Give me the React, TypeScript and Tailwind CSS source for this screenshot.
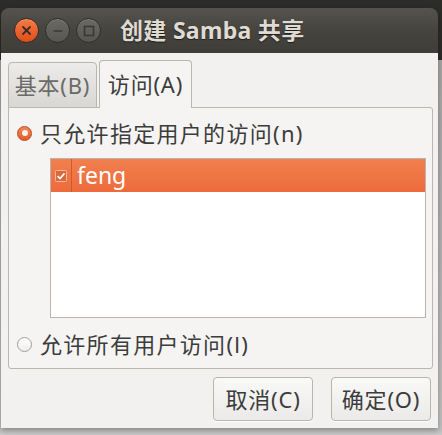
import React from "react";

const FONT = '"Noto Sans", "Noto Sans CJK SC", sans-serif';

function WinButton({ kind }: { kind: "close" | "min" | "max" }) {
  if (kind === "close") {
    return (
      <div className="w-[25px] h-[25px] rounded-full border border-[#3a2a22] bg-[linear-gradient(to_bottom,#f47a44,#df4e1a)] flex items-center justify-center shadow-[inset_0_1px_0_rgba(255,255,255,0.25)]">
        <svg width="11" height="11" viewBox="0 0 11 11">
          <path d="M2 2 L9 9 M9 2 L2 9" stroke="#3a2d28" strokeWidth="1.8" strokeLinecap="round" />
        </svg>
      </div>
    );
  }
  return (
    <div className="w-[25px] h-[25px] rounded-full border border-[#2f2e2b] bg-[linear-gradient(to_bottom,#6a6964,#57564f)] flex items-center justify-center shadow-[inset_0_1px_0_rgba(255,255,255,0.15)]">
      {kind === "min" ? (
        <svg width="12" height="12" viewBox="0 0 12 12">
          <path d="M1.5 6 L10.5 6" stroke="#3a3935" strokeWidth="1.6" />
        </svg>
      ) : (
        <svg width="12" height="12" viewBox="0 0 12 12">
          <rect x="1.5" y="1.5" width="9" height="9" fill="none" stroke="#3a3935" strokeWidth="1.6" />
        </svg>
      )}
    </div>
  );
}

export default function App() {
  return (
    <div
      className="w-[442px] h-[435px] overflow-hidden pl-[1px] pr-[4px] pt-[8px] bg-[linear-gradient(to_bottom,#2c2c2b_0px,#2c2c2b_60px,#a9a9a9_60px,#c4c4c4_430px,#c9c9c9_100%)]"
      style={{ fontFamily: FONT }}
    >
      <div className="w-[437px] h-[420px] flex flex-col rounded-t-[8px] overflow-hidden shadow-[0_2px_6px_rgba(0,0,0,0.35)]">
        {/* title bar */}
        <div className="h-[45px] flex items-center bg-[linear-gradient(to_bottom,#55534c,#46443f_50%,#3e3d39)] pl-[13px] gap-[6px]">
          <WinButton kind="close" />
          <WinButton kind="min" />
          <WinButton kind="max" />
          <div className="ml-[13px] text-[23px] font-bold text-[#dfdbd2] leading-none tracking-[0.3px] [text-shadow:0_1px_1px_rgba(0,0,0,0.6)]">
            创建 Samba 共享
          </div>
        </div>
        {/* body */}
        <div className="flex-1 bg-[#f2f1f0] flex flex-col px-[7px] pt-[7px]">
          {/* tabs */}
          <div className="flex items-end h-[47px] gap-[2px]">
            <div className="w-[89px] h-[46px] mb-[-1px] rounded-t-[4px] border border-[#bab6b0] bg-[linear-gradient(to_bottom,#ecebe9,#d9d7d4)] flex items-center justify-center text-[22px] tracking-[0.8px] text-[#6b6a66]">
              基本(B)
            </div>
            <div className="relative z-10 w-[93px] h-[48px] mb-[-1px] rounded-t-[4px] border border-b-0 border-[#bab6b0] bg-[#f5f4f3] flex items-center justify-center text-[22px] tracking-[0.8px] text-[#3c3c3c]">
              访问(A)
            </div>
          </div>
          {/* panel */}
          <div className="w-[425px] h-[262px] rounded-[3px] rounded-tl-none border border-[#bab6b0] bg-[#f5f4f3] flex flex-col pt-[13px]">
            <div className="h-[24px] flex items-center pl-[8px] gap-[8px]">
              <div className="w-[15px] h-[15px] rounded-full border border-[#b64a1e] bg-[linear-gradient(to_bottom,#f2875a,#e35f2a)] flex items-center justify-center">
                <div className="w-[6px] h-[6px] rounded-full bg-[#fff3ea]" />
              </div>
              <div className="text-[22px] tracking-[1.3px] text-[#3c3c3c] leading-none">只允许指定用户的访问(n)</div>
            </div>
            <div className="mt-[13px] ml-[41px] mr-[6px] h-[160px] border border-[#b8b5b0] bg-white flex flex-col">
              <div className="h-[33px] flex bg-[linear-gradient(to_bottom,#f27f4f,#ed6b3b)]">
                <div className="w-[21px] border-r border-[#cf5a2d] flex items-center justify-center">
                  <svg width="12" height="12" viewBox="0 0 12 12">
                    <rect x="0.5" y="0.5" width="11" height="11" rx="1" fill="#d9683d" stroke="#f6b79b" />
                    <path d="M2.6 6.2 L5 8.5 L9.5 3.4" fill="none" stroke="#ffffff" strokeWidth="1.6" />
                  </svg>
                </div>
                <div className="flex items-center pl-[5px] text-[23px] text-white leading-none">feng</div>
              </div>
            </div>
            <div className="mt-[14px] h-[24px] flex items-center pl-[8px] gap-[8px]">
              <div className="w-[15px] h-[15px] rounded-full border border-[#a19e99] bg-[linear-gradient(to_bottom,#ffffff,#efeeed)]" />
              <div className="text-[22px] tracking-[1.3px] text-[#3c3c3c] leading-none">允许所有用户访问(l)</div>
            </div>
          </div>
          {/* buttons */}
          <div className="mt-[8px] flex justify-end gap-[18px] pr-[0px]">
            <button className="w-[100px] h-[44px] rounded-[4px] border border-[#b8b4ae] bg-[linear-gradient(to_bottom,#f9f9f8,#ebeae8)] shadow-[0_1px_0_rgba(255,255,255,0.8)] text-[22px] tracking-[0.8px] text-[#3c3c3c] flex items-center justify-center">
              取消(C)
            </button>
            <button className="w-[100px] h-[44px] rounded-[4px] border border-[#b8b4ae] bg-[linear-gradient(to_bottom,#f9f9f8,#ebeae8)] shadow-[0_1px_0_rgba(255,255,255,0.8)] text-[22px] tracking-[0.8px] text-[#3c3c3c] flex items-center justify-center">
              确定(O)
            </button>
          </div>
        </div>
      </div>
    </div>
  );
}
